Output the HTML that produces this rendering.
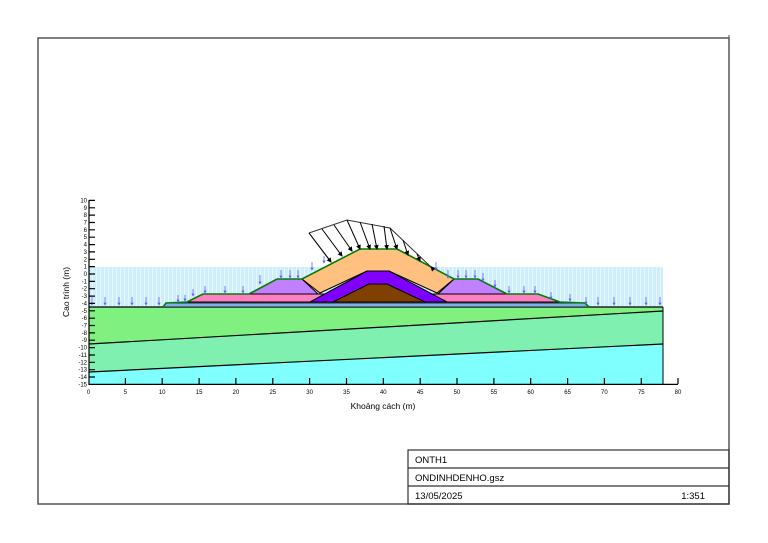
<!DOCTYPE html>
<html><head><meta charset="utf-8"><style>
html,body{margin:0;padding:0;background:#fff;}
svg{display:block;font-family:"Liberation Sans",sans-serif;}
</style></head><body>
<svg width="768" height="543" viewBox="0 0 768 543" xmlns="http://www.w3.org/2000/svg">
<defs>
<pattern id="wp" width="4" height="10" patternUnits="userSpaceOnUse">
<rect width="4" height="10" fill="#cfeefc"/><rect x="0" width="1" height="10" fill="#e6f7fe"/>
</pattern>
<marker id="ah" markerWidth="5" markerHeight="5" refX="4" refY="2.5" orient="auto"><path d="M0,0 L5,2.5 L0,5z" fill="#000"/></marker>
<marker id="bh" markerWidth="4" markerHeight="4" refX="3" refY="2" orient="auto"><path d="M0,0 L4,2 L0,4z" fill="#6060ff"/></marker>
</defs>
<!-- frame -->
<path d="M38,504 V38 H729 V504 Z" fill="none" stroke="#555" stroke-width="1.5"/>
<line x1="729" y1="35" x2="729" y2="41" stroke="#555"/>
<!-- water -->
<rect x="89" y="267" width="574" height="40" fill="url(#wp)"/>
<!-- soils -->
<polygon points="89,307 663,307 663,311 89,344" fill="#80f080"/>
<polygon points="89,344 663,311 663,344 89,372" fill="#80f0b0"/>
<polygon points="89,372 663,344 663,384 89,384" fill="#80ffff"/>
<line x1="89" y1="344" x2="663" y2="311" stroke="#000" stroke-width="1.2"/>
<line x1="89" y1="372" x2="663" y2="344" stroke="#000" stroke-width="1.2"/>
<line x1="89" y1="307" x2="663" y2="307" stroke="#000" stroke-width="1.2"/>
<line x1="663" y1="307" x2="663" y2="384" stroke="#000"/>
<!-- thin blue strip -->
<polygon points="163,307 166,303 585,303 589,307" fill="#7fb0e8" stroke="#000" stroke-width="0.8"/>
<!-- pink layer -->
<polygon points="187,302 203,294 538,294 560,302" fill="#ff80c0" stroke="#000" stroke-width="1"/>
<!-- light purple -->
<polygon points="249,294 277,279 302,279 318,294" fill="#c080ff" stroke="#000" stroke-width="1"/>
<polygon points="438,294 454,279 478,279 507,294" fill="#c080ff" stroke="#000" stroke-width="1"/>
<!-- orange -->
<polygon points="302,279 360,249 397,249 454,279 437,293 389,271 367,271 320,293" fill="#ffc080" stroke="#000" stroke-width="1"/>
<!-- violet -->
<polygon points="310,302 367,271 389,271 447,302 425,302 387,284 369,284 333,302" fill="#8000ff" stroke="#000" stroke-width="1"/>
<!-- brown -->
<polygon points="333,302 369,284 387,284 425,302" fill="#804000" stroke="#000" stroke-width="1"/>
<!-- green surface -->
<polyline points="163,307 166,303 187,302 203,294 249,294 277,279 302,279 360,249 397,249 454,279 478,279 507,294 538,294 560,302 585,303 589,307" fill="none" stroke="#008000" stroke-width="1.6"/>
<!-- load -->
<polyline points="309,233 347,220 390,228 432,268" fill="none" stroke="#333" stroke-width="1"/>
<line x1="309" y1="233" x2="331" y2="262" stroke="#333"/>
<g stroke="#000" stroke-width="1" marker-end="url(#ah)">
<line x1="309" y1="233" x2="331" y2="262"/>
<line x1="322" y1="229" x2="342" y2="256"/>
<line x1="334" y1="225" x2="352" y2="251"/>
<line x1="347" y1="220" x2="360" y2="249"/>
<line x1="360" y1="222" x2="370" y2="249"/>
<line x1="372" y1="224" x2="377" y2="249"/>
<line x1="384" y1="226" x2="387" y2="249"/>
<line x1="390" y1="228" x2="397" y2="249"/>
<line x1="403" y1="240" x2="408" y2="255"/>
<line x1="417" y1="254" x2="420" y2="261"/>
<line x1="432" y1="268" x2="431" y2="267"/>
</g>
<!-- water arrows -->
<g stroke="#6060ff" stroke-width="0.8" marker-end="url(#bh)">
<line x1="92" y1="297" x2="92" y2="305"/><line x1="105" y1="297" x2="105" y2="305"/><line x1="119" y1="297" x2="119" y2="305"/><line x1="132" y1="297" x2="132" y2="305"/><line x1="146" y1="297" x2="146" y2="305"/><line x1="159" y1="297" x2="159" y2="305"/>
<line x1="178" y1="295" x2="178" y2="302"/><line x1="185" y1="295" x2="185" y2="301"/><line x1="193" y1="289" x2="193" y2="296"/><line x1="205" y1="286" x2="205" y2="293"/><line x1="225" y1="286" x2="225" y2="293"/><line x1="243" y1="286" x2="243" y2="293"/><line x1="260" y1="275" x2="260" y2="284"/><line x1="281" y1="270" x2="281" y2="278"/><line x1="290" y1="270" x2="290" y2="278"/><line x1="298" y1="270" x2="298" y2="278"/><line x1="312" y1="262" x2="312" y2="270"/><line x1="324" y1="256" x2="324" y2="263"/>
<line x1="436" y1="262" x2="436" y2="270"/><line x1="448" y1="270" x2="448" y2="278"/><line x1="458" y1="270" x2="458" y2="278"/><line x1="466" y1="270" x2="466" y2="278"/><line x1="475" y1="270" x2="475" y2="278"/><line x1="483" y1="273" x2="483" y2="281"/><line x1="495" y1="280" x2="495" y2="287"/><line x1="509" y1="286" x2="509" y2="293"/><line x1="524" y1="286" x2="524" y2="293"/><line x1="535" y1="286" x2="535" y2="293"/><line x1="551" y1="292" x2="551" y2="299"/><line x1="570" y1="294" x2="570" y2="301"/><line x1="586" y1="297" x2="586" y2="304"/><line x1="598" y1="297" x2="598" y2="305"/><line x1="614" y1="297" x2="614" y2="305"/><line x1="630" y1="297" x2="630" y2="305"/><line x1="646" y1="297" x2="646" y2="305"/><line x1="660" y1="297" x2="660" y2="305"/>
</g>
<!-- axes -->
<g stroke="#000" stroke-width="1.2" fill="none">
<path d="M89,200 V384.4 H678"/>
<path d="M89,200.4h6M89,207.8h6M89,215.1h6M89,222.5h6M89,229.8h6M89,237.2h6M89,244.6h6M89,251.9h6M89,259.3h6M89,266.6h6M89,274h6M89,281.4h6M89,288.7h6M89,296.1h6M89,303.4h6M89,310.8h6M89,318.2h6M89,325.5h6M89,332.9h6M89,340.2h6M89,347.6h6M89,355h6M89,362.3h6M89,369.7h6M89,377h6"/>
<path d="M125.4,384v-6M162.2,384v-6M199.1,384v-6M235.9,384v-6M272.8,384v-6M309.6,384v-6M346.5,384v-6M383.3,384v-6M420.2,384v-6M457,384v-6M493.9,384v-6M530.7,384v-6M567.6,384v-6M604.4,384v-6M641.3,384v-6M678,384v-6"/>
</g>
<g font-size="6" text-anchor="end" fill="#000">
<text x="87" y="202.4">10</text><text x="87" y="209.8">9</text><text x="87" y="217.1">8</text><text x="87" y="224.5">7</text><text x="87" y="231.8">6</text><text x="87" y="239.2">5</text><text x="87" y="246.6">4</text><text x="87" y="253.9">3</text><text x="87" y="261.3">2</text><text x="87" y="268.6">1</text><text x="87" y="276">0</text><text x="87" y="283.4">-1</text><text x="87" y="290.7">-2</text><text x="87" y="298.1">-3</text><text x="87" y="305.4">-4</text><text x="87" y="312.8">-5</text><text x="87" y="320.2">-6</text><text x="87" y="327.5">-7</text><text x="87" y="334.9">-8</text><text x="87" y="342.2">-9</text><text x="87" y="349.6">-10</text><text x="87" y="357">-11</text><text x="87" y="364.3">-12</text><text x="87" y="371.7">-13</text><text x="87" y="379">-14</text><text x="87" y="386.4">-15</text>
</g>
<g font-size="6" text-anchor="middle" fill="#000">
<text x="88.5" y="394">0</text><text x="125.4" y="394">5</text><text x="162.2" y="394">10</text><text x="199.1" y="394">15</text><text x="235.9" y="394">20</text><text x="272.8" y="394">25</text><text x="309.6" y="394">30</text><text x="346.5" y="394">35</text><text x="383.3" y="394">40</text><text x="420.2" y="394">45</text><text x="457" y="394">50</text><text x="493.9" y="394">55</text><text x="530.7" y="394">60</text><text x="567.6" y="394">65</text><text x="604.4" y="394">70</text><text x="641.3" y="394">75</text><text x="678" y="394">80</text>
</g>
<text x="383" y="409" font-size="8.5" text-anchor="middle">Khoảng cách (m)</text>
<text transform="translate(69,292) rotate(-90)" font-size="8.5" text-anchor="middle">Cao trình (m)</text>
<!-- title block -->
<g stroke="#333" stroke-width="1.2" fill="none">
<rect x="408" y="450" width="321" height="54"/>
<line x1="408" y1="468" x2="729" y2="468"/>
<line x1="408" y1="486" x2="729" y2="486"/>
</g>
<g font-size="9.5" fill="#000">
<text x="415" y="463">ONTH1</text>
<text x="415" y="481">ONDINHDENHO.gsz</text>
<text x="415" y="499">13/05/2025</text>
<text x="705" y="499" text-anchor="end">1:351</text>
</g>
</svg>
</body></html>
